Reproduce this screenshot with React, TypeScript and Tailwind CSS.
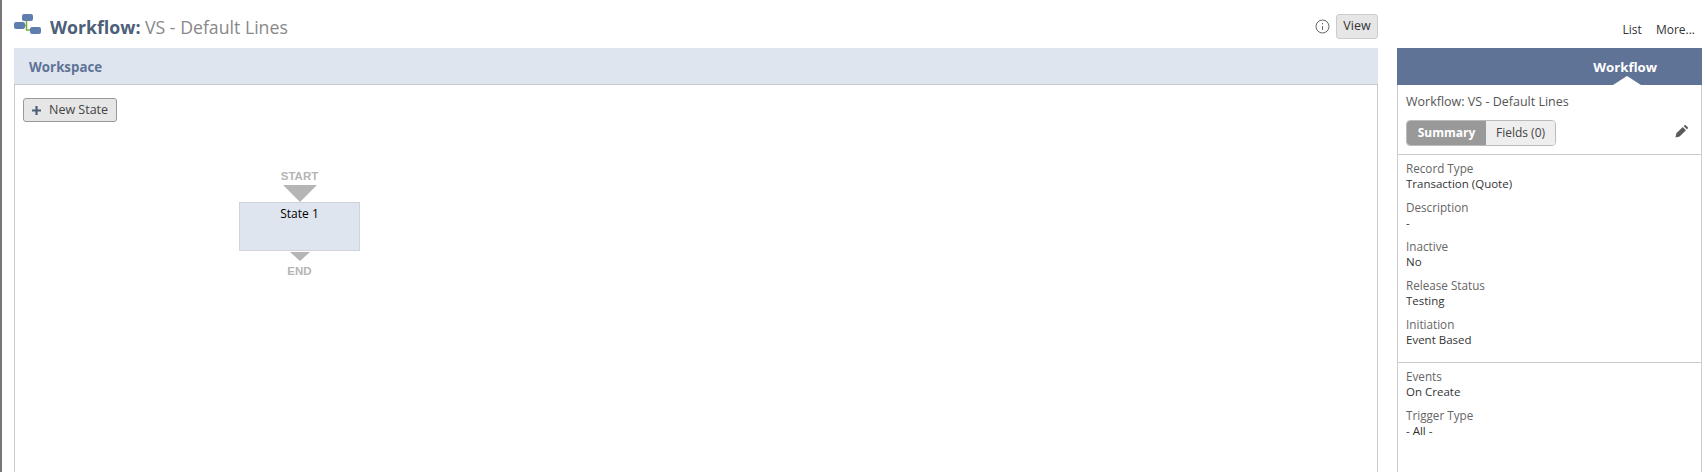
const font = "font-['Open_Sans',sans-serif]";

const summary = [
  [
    ["Record Type", "Transaction (Quote)"],
    ["Description", "-"],
    ["Inactive", "No"],
    ["Release Status", "Testing"],
    ["Initiation", "Event Based"],
  ],
  [
    ["Events", "On Create"],
    ["Trigger Type", "- All -"],
  ],
];

function WorkflowIcon() {
  return (
    <svg width="27" height="20" viewBox="0 0 27 20" className="shrink-0">
      <path d="M12.5 7v9h4M8 11.5h5" stroke="#7cae3c" strokeWidth="1.5" fill="none" />
      <rect x="8" y="0" width="11" height="7" rx="2" fill="#5f7dae" />
      <rect x="0" y="8" width="11" height="7" rx="2" fill="#5f7dae" />
      <rect x="16" y="13" width="11" height="7" rx="2" fill="#5f7dae" />
    </svg>
  );
}

function Field({ label, value }: { label: string; value: string }) {
  return (
    <div className="h-[39px] leading-[15px]">
      <div className="text-[11.7px] text-[#666]">{label}</div>
      <div className="text-[11.5px] text-[#333]">{value}</div>
    </div>
  );
}

export default function App() {
  return (
    <div className={`${font} flex h-[472px] w-[1705px] overflow-hidden border-l-2 border-[#777] bg-white`}>
      <main className="ml-3 flex w-[1364px] shrink-0 flex-col">
        <header className="flex h-12 items-start justify-between pt-[14px]">
          <div className="flex items-start gap-[9px]">
            <WorkflowIcon />
            <h1 className="mt-[1px] text-[17.7px] leading-6 text-[#888]">
              <b className="font-bold text-[#4d5f79]">Workflow:</b> VS - Default Lines
            </h1>
          </div>
          <div className="flex items-center gap-[6px]">
            <svg width="15" height="15" viewBox="0 0 15 15" fill="none" stroke="#666">
              <circle cx="7.5" cy="7.5" r="6.5" />
              <path d="M7.5 7v4M7.5 4v1.3" />
            </svg>
            <button className="h-[25px] w-[42px] rounded-[3px] border border-[#ccc] bg-[#e6e6e6] text-[12.5px] font-medium text-[#333]">
              View
            </button>
          </div>
        </header>
        <section className="flex flex-1 flex-col">
          <h2 className="flex h-[37px] items-center border-b border-[#c8c8c8] bg-[#dfe5ef] pl-[15px] pt-[3px] text-[13.3px] font-bold text-[#5f7396]">
            Workspace
          </h2>
          <div className="relative flex-1 border-x border-[#ccc]">
            <button className="absolute left-[8px] top-[13px] flex h-[24px] w-[94px] items-center gap-[8px] rounded-[3px] border border-[#999] bg-[#e6e6e6] pl-[8px] text-[12.5px] text-[#444]">
              <svg width="9" height="9" viewBox="0 0 10 10" fill="#4d5f79" className="shrink-0">
                <path d="M3.8 0h2.4v3.8H10v2.4H6.2V10H3.8V6.2H0V3.8h3.8z" />
              </svg>
              New State
            </button>
            <div className="absolute left-[224px] top-[84px] flex w-[121px] flex-col items-center">
              <span className="font-['Liberation_Sans',sans-serif] text-[11.5px] font-bold leading-[14px] text-[#b5b5b5]">START</span>
              <div className="mt-[2px] h-0 w-0 border-x-[17px] border-t-[17px] border-x-transparent border-t-[#b5b5b5]" />
              <div className="h-[49px] w-[121px] border border-[#d0d4da] bg-[#dfe5ef] pt-[1px] text-center text-[12px] leading-[19px] text-black">
                State 1
              </div>
              <div className="mt-[1px] h-0 w-0 border-x-[10px] border-t-[9px] border-x-transparent border-t-[#b5b5b5]" />
              <span className="mt-[3px] font-['Liberation_Sans',sans-serif] text-[11.5px] font-bold leading-[14px] text-[#b5b5b5]">END</span>
            </div>
          </div>
        </section>
      </main>
      <aside className="ml-[19px] flex w-[305px] shrink-0 flex-col">
        <nav className="flex h-12 items-end justify-end gap-[14px] pb-[9px] pr-[7px] text-[12px] text-[#333]">
          <span>List</span>
          <span>More...</span>
        </nav>
        <div className="relative flex h-[37px] items-center justify-end bg-[#5f7396] pr-[45px] pt-[2px] text-[13.2px] font-bold text-white">
          Workflow
          <div className="absolute bottom-0 right-[61px] h-0 w-0 border-x-[14px] border-b-[9px] border-x-transparent border-b-white" />
        </div>
        <div className="flex-1 border-x border-[#ccc]">
          <div className="flex h-[70px] flex-col border-b border-[#ccc] px-[8px] pt-[8px]">
            <div className="text-[12.5px] leading-[18px] text-[#555]">Workflow: VS - Default Lines</div>
            <div className="mt-[9px] flex items-center justify-between">
              <div className="flex h-[26px] w-[150px] overflow-hidden rounded-[4px] border border-[#bbb] text-[12px]">
                <span className="flex w-[79px] items-center justify-center bg-[#999] font-bold text-white">Summary</span>
                <span className="flex flex-1 items-center justify-center bg-[#eee] text-[#444]">Fields (0)</span>
              </div>
              <svg width="13" height="13" viewBox="0 0 14 14" fill="#5a5a5a" className="mb-[4px] mr-[5px]">
                <path d="M0.5 13.5l1-4.5 6.8-6.8 3.5 3.5-6.8 6.8zM9.3 1.2l1-1c.4-.3.8-.3 1.2 0l2.3 2.3c.3.4.3.8 0 1.2l-1 1z" />
              </svg>
            </div>
          </div>
          {summary.map((group, i) => (
            <div key={i} className={i === 0 ? "h-[208px] border-b border-[#ccc] px-[8px] pt-[6px]" : "px-[8px] pt-[6px]"}>
              {group.map(([label, value]) => (
                <Field key={label} label={label} value={value} />
              ))}
            </div>
          ))}
        </div>
      </aside>
    </div>
  );
}
